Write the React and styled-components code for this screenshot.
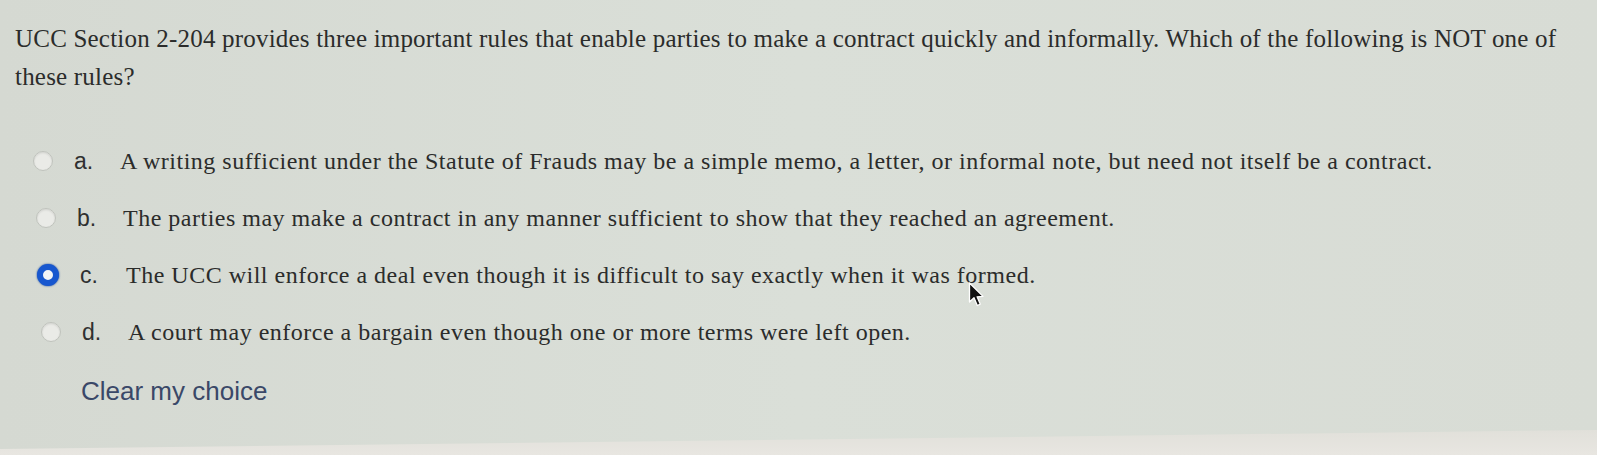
import React, { useState } from 'react';
import styled, { createGlobalStyle } from 'styled-components';

const GlobalStyle = createGlobalStyle`
  html, body {
    margin: 0;
    padding: 0;
    background: #d9ddd6;
  }
`;

const Page = styled.main`
  position: relative;
  width: 1597px;
  height: 455px;
  overflow: hidden;
  background: linear-gradient(90deg, #d5d9d2 0%, #dadfd8 50%, #d8dcd5 100%);
`;

const Content = styled.section`
  padding: 20px 0 0 15px;
`;

const Question = styled.p`
  margin: 0;
  width: 1570px;
  font-family: 'Liberation Serif', 'Times New Roman', serif;
  font-size: 25px;
  letter-spacing: 0.2px;
  line-height: 38px;
  color: #2b2c2b;
`;

const Answers = styled.div`
  margin-top: 48px;
  display: flex;
  flex-direction: column;
  gap: 23px;
`;

const Row = styled.label`
  display: flex;
  align-items: center;
  height: 34px;
  padding-left: ${(p) => p.$indent}px;
  cursor: pointer;
`;

const Radio = styled.span`
  flex: none;
  box-sizing: border-box;
  width: ${(p) => (p.$checked ? 22 : 20)}px;
  height: ${(p) => (p.$checked ? 22 : 20)}px;
  margin-left: ${(p) => (p.$checked ? -1 : 0)}px;
  margin-right: 21px;
  border-radius: 50%;
  background: ${(p) => (p.$checked ? '#f2f4f6' : '#eaebe7')};
  border: ${(p) => (p.$checked ? '6px solid #1757cf' : '1px solid #c0c3bd')};
  box-shadow: ${(p) => (p.$checked ? '0 0 2px #0c3d9a' : 'inset 0 1px 2px rgba(0,0,0,0.1)')};
`;

const Letter = styled.span`
  flex: none;
  width: 46px;
  font-family: 'Liberation Sans', Arial, sans-serif;
  font-size: 23px;
  color: #2f3030;
`;

const Text = styled.span`
  font-family: 'Liberation Serif', 'Times New Roman', serif;
  font-size: 24px;
  letter-spacing: 0.5px;
  color: #2b2c2b;
`;

const Clear = styled.button`
  display: block;
  margin: 27px 0 0 66px;
  padding: 0;
  border: none;
  background: none;
  font-family: 'Liberation Sans', Arial, sans-serif;
  font-size: 26px;
  color: #3a4868;
  cursor: pointer;
`;

const BottomStrip = styled.div`
  position: absolute;
  left: 0;
  right: 0;
  bottom: 0;
  height: 25px;
  background: linear-gradient(180deg, #e1e0da 0%, #e8e6e1 100%);
  clip-path: polygon(0 19px, 100% 0, 100% 100%, 0 100%);
`;

const Cursor = styled.svg`
  position: absolute;
  left: 968px;
  top: 282px;
`;

const options = [
  { key: 'a', text: 'A writing sufficient under the Statute of Frauds may be a simple memo, a letter, or informal note, but need not itself be a contract.', indent: 18 },
  { key: 'b', text: 'The parties may make a contract in any manner sufficient to show that they reached an agreement.', indent: 21 },
  { key: 'c', text: 'The UCC will enforce a deal even though it is difficult to say exactly when it was formed.', indent: 23 },
  { key: 'd', text: 'A court may enforce a bargain even though one or more terms were left open.', indent: 26 },
];

export default function App() {
  const [choice, setChoice] = useState('c');

  return (
    <>
      <GlobalStyle />
      <Page>
        <Content>
          <Question>
            UCC Section 2-204 provides three important rules that enable parties to make a contract quickly and informally. Which of the following is NOT one of these rules?
          </Question>
          <Answers>
            {options.map((o) => (
              <Row key={o.key} $indent={o.indent} onClick={() => setChoice(o.key)}>
                <Radio $checked={choice === o.key} />
                <Letter>{o.key}.</Letter>
                <Text>{o.text}</Text>
              </Row>
            ))}
          </Answers>
          <Clear onClick={() => setChoice(null)}>Clear my choice</Clear>
        </Content>
        <BottomStrip />
        <Cursor width="17" height="26" viewBox="0 0 17 26">
          <path d="M1.5 1 L1.5 20 L6 15.8 L9.3 23.5 L12.3 22.2 L9.1 14.8 L15 14.4 Z" fill="#111" stroke="#fff" strokeWidth="1.3" strokeLinejoin="round" />
        </Cursor>
      </Page>
    </>
  );
}
